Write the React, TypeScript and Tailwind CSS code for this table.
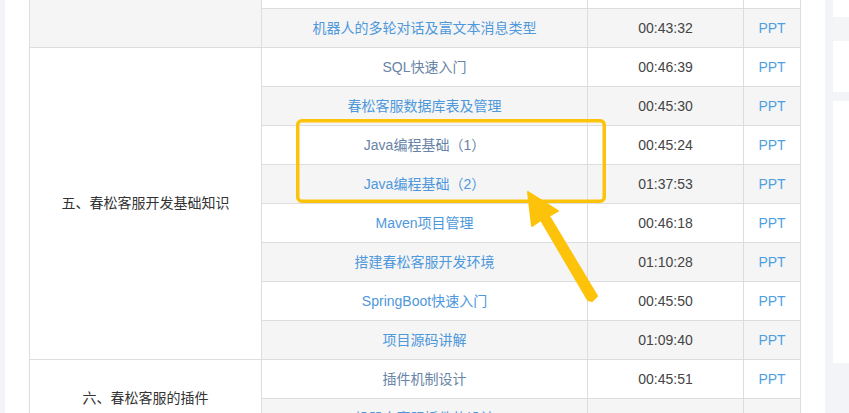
type Lesson = { title: string; time: string; muted?: boolean; ppt?: boolean };

const prevLessons: Lesson[] = [
  { title: "", time: "", ppt: false },
  { title: "机器人的多轮对话及富文本消息类型", time: "00:43:32" },
];

const groupFive: Lesson[] = [
  { title: "SQL快速入门", time: "00:46:39", muted: true },
  { title: "春松客服数据库表及管理", time: "00:45:30" },
  { title: "Java编程基础（1）", time: "00:45:24", muted: true },
  { title: "Java编程基础（2）", time: "01:37:53" },
  { title: "Maven项目管理", time: "00:46:18" },
  { title: "搭建春松客服开发环境", time: "01:10:28" },
  { title: "SpringBoot快速入门", time: "00:45:50" },
  { title: "项目源码讲解", time: "01:09:40" },
];

// last row is cut off by the window; only the top of the title shows
const groupSix: Lesson[] = [
  { title: "插件机制设计", time: "00:45:51", muted: true },
  { title: "机器人客服插件的设计", time: "", ppt: false },
];

const groups = [
  { name: "", lessons: prevLessons, gray: true },
  { name: "五、春松客服开发基础知识", lessons: groupFive, gray: false },
  { name: "六、春松客服的插件", lessons: groupSix, gray: false },
];

const cell = "border border-[#dddddd] h-[39px] p-0 text-center align-middle";

function Rows() {
  let index = 0;
  return (
    <>
      {groups.map((g) =>
        g.lessons.map((l, i) => {
          const stripe = index++ % 2 === 1 ? "bg-[#f5f5f5]" : "bg-white";
          return (
            <tr key={g.name + i} className={stripe}>
              {i === 0 && (
                <td
                  rowSpan={g.lessons.length}
                  className={`${cell} text-[#333333] ${g.gray ? "bg-[#f5f5f5]" : "bg-white"}`}
                >
                  {g.name}
                </td>
              )}
              <td className={`${cell} ${l.muted ? "text-[#6884a6]" : "text-[#4e98dc]"}`}>{l.title}</td>
              <td className={`${cell} text-[#444444]`}>{l.time}</td>
              <td className={`${cell} text-[#4e9fe2]`}>{l.ppt === false ? "" : "PPT"}</td>
            </tr>
          );
        })
      )}
    </>
  );
}

export default function App() {
  return (
    <div
      className="relative flex h-[413px] w-[849px] overflow-hidden bg-[#f3f4f7] text-[14px]"
      style={{ fontFamily: '"Liberation Sans", "Noto Sans CJK SC", sans-serif' }}
    >
      {/* main panel */}
      <div className="ml-[5px] w-[820px] shrink-0 bg-white pl-[24px] pr-[25px]">
        <table className="-mt-[31px] w-[771px] table-fixed border-collapse">
          <colgroup>
            <col className="w-[232px]" />
            <col className="w-[326px]" />
            <col className="w-[156px]" />
            <col className="w-[57px]" />
          </colgroup>
          <tbody>
            <Rows />
          </tbody>
        </table>
      </div>

      {/* right side cards */}
      <div className="ml-[8px] flex w-[240px] shrink-0 flex-col gap-[9px]">
        <div className="h-[92px] bg-white pt-[17px]">
          <div className="h-[24px] bg-[#f4f5f7]" />
        </div>
        <div className="h-[262px] bg-white" />
      </div>

      {/* annotation */}
      <svg className="pointer-events-none absolute left-0 top-0" width="849" height="413">
        <rect x="297.75" y="120.75" width="306.5" height="80.5" rx="4" fill="none" stroke="#fdc30a" strokeWidth="3.5" />
        <polygon
          points="528,192 558,211 549,216 597,296 592,301 588,300 541,220 532,226"
          fill="#fdc30a"
          stroke="#fdc30a"
          strokeWidth="2"
          strokeLinejoin="round"
        />
      </svg>
    </div>
  );
}
